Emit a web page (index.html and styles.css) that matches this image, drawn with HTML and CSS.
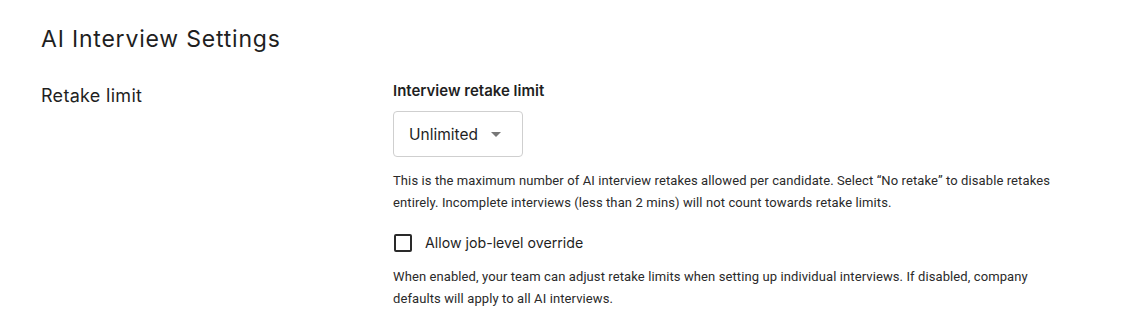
FILE: index.html
```html
<!DOCTYPE html>
<html lang="en">
<head>
  <meta charset="UTF-8" />
  <title>AI Interview Settings</title>
  <link rel="stylesheet" href="styles.css">
</head>
<body>
  <div class="page">
    <h2>AI Interview Settings</h2>

    <div class="row">
      <div class="row-label">Retake limit</div>

      <div class="row-body">
        <label class="field-label" for="retakeLimit">Interview retake limit</label>
        <div class="select" id="retakeLimit">
          <span>Unlimited</span>
          <span class="caret"></span>
        </div>
        <p class="help">This is the maximum number of AI interview retakes allowed per candidate. Select “No retake” to disable retakes entirely. Incomplete interviews (less than 2 mins) will not count towards retake limits.</p>

        <label class="check">
          <span class="box"></span>
          Allow job-level override
        </label>
        <p class="help help-tight">When enabled, your team can adjust retake limits when setting up individual interviews. If disabled, company defaults will apply to all AI interviews.</p>
      </div>
    </div>
  </div>
</body>
</html>
```

FILE: styles.css
```css
body {
  margin: 0;
  font-family: Inter, "Noto Sans", sans-serif;
  color: #1f1f1f;
  background: #fff;
}

.page {
  padding: 24px 41px;
}

h2 {
  margin: 0 0 26px;
  font-size: 23px;
  font-weight: 400;
  line-height: 30px;
  letter-spacing: 0.8px;
}

.row {
  display: flex;
}

.row-label {
  width: 352px;
  padding-top: 4px;
  font-size: 18px;
  line-height: 24px;
  letter-spacing: 0.3px;
}

.row-body {
  width: 660px;
}

.field-label {
  display: block;
  margin-bottom: 9px;
  font-size: 15px;
  font-weight: 600;
  line-height: 22px;
}

.select {
  display: flex;
  align-items: center;
  width: 130px;
  height: 46px;
  padding: 0 15px;
  box-sizing: border-box;
  border: 1px solid #cfcfcf;
  border-radius: 4px;
  font-size: 15.5px;
}

.caret {
  margin-left: 13px;
  width: 0;
  height: 0;
  border-left: 5px solid transparent;
  border-right: 5px solid transparent;
  border-top: 5px solid #777;
}

.help {
  margin: 13px 0 0;
  font-family: Roboto, sans-serif;
  font-size: 13px;
  line-height: 22px;
  letter-spacing: 0.1px;
  color: #2a2a2a;
}

.help-tight {
  margin-top: 12px;
}

.check {
  display: flex;
  align-items: center;
  gap: 13px;
  margin-top: 18px;
  font-size: 14.2px;
  line-height: 22px;
}

.box {
  flex: none;
  width: 14px;
  height: 14px;
  border: 2px solid #2a2a2a;
  border-radius: 2px;
  margin-left: 1px;
}
```
